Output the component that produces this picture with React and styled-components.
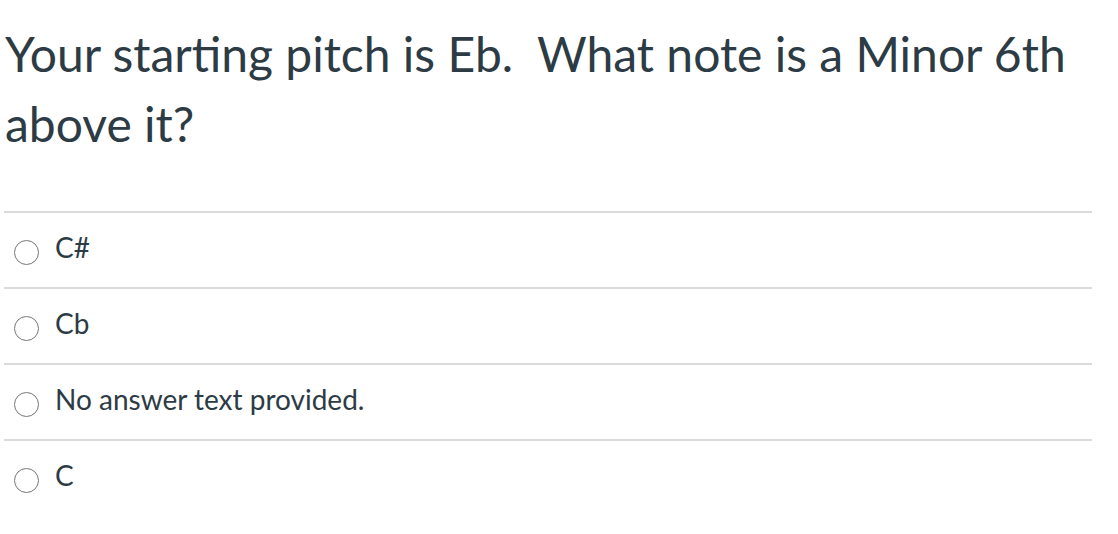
import React from 'react';
import styled, { createGlobalStyle } from 'styled-components';

const GlobalStyle = createGlobalStyle`
  body {
    margin: 0;
    background: #ffffff;
    font-family: Lato, "Helvetica Neue", Arial, sans-serif;
    color: #2d3b45;
  }
`;

const Quiz = styled.div`
  width: 1088px;
  padding: 19px 0 0 4px;
`;

const Question = styled.p`
  margin: 0 0 52px 1px;
  font-size: 48px;
  line-height: 70px;
  font-weight: 400;
`;

const Answers = styled.div`
  display: flex;
  flex-direction: column;
`;

const Answer = styled.label`
  display: flex;
  align-items: center;
  gap: 16px;
  height: 74px;
  border-top: 2px solid #dadada;
  padding-left: 10px;
  font-size: 28px;
`;

const Radio = styled.span`
  width: 25px;
  height: 25px;
  box-sizing: border-box;
  border: 1.5px solid #747779;
  border-radius: 50%;
  margin-top: 4px;
  flex-shrink: 0;
`;

const AnswerText = styled.span`
  margin-bottom: 6px;
`;

const answers = ['C#', 'Cb', 'No answer text provided.', 'C'];

const App = () => (
  <>
    <GlobalStyle />
    <Quiz>
      <Question>
        Your starting pitch is Eb.&nbsp; What note is a Minor 6th above it?
      </Question>
      <Answers>
        {answers.map((a) => (
          <Answer key={a}>
            <Radio />
            <AnswerText>{a}</AnswerText>
          </Answer>
        ))}
      </Answers>
    </Quiz>
  </>
);

export default App;
